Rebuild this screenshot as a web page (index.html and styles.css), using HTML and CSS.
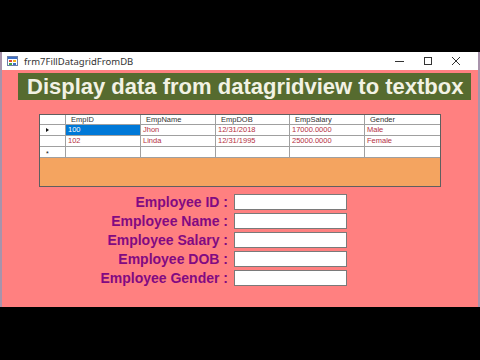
FILE: index.html
```html
<!DOCTYPE html>
<html>
<head>
<meta charset="utf-8">
<link rel="stylesheet" href="styles.css">
</head>
<body>
<div class="letterbox"></div>
<div class="window">
  <div class="titlebar">
    <svg class="app-icon" width="11" height="10" viewBox="0 0 11 10">
      <rect x="0.5" y="0.5" width="10" height="9" fill="#fff" stroke="#6b7fa8"/>
      <rect x="1" y="1" width="9" height="2" fill="#3d6fc4"/>
      <rect x="2" y="4" width="3" height="2" fill="#e0473a"/>
      <rect x="6" y="4" width="3" height="2" fill="#f2b31c"/>
      <rect x="2" y="7" width="3" height="2" fill="#45a845"/>
      <rect x="6" y="7" width="3" height="2" fill="#3d6fc4"/>
    </svg>
    <span class="title">frm7FillDatagridFromDB</span>
    <div class="controls">
      <span class="ctl"><svg width="10" height="10" viewBox="0 0 10 10"><line x1="0" y1="5.5" x2="9" y2="5.5" stroke="#333" stroke-width="1"/></svg></span>
      <span class="ctl"><svg width="10" height="10" viewBox="0 0 10 10"><rect x="1.5" y="1.5" width="7" height="7" fill="none" stroke="#333" stroke-width="1"/></svg></span>
      <span class="ctl"><svg width="10" height="10" viewBox="0 0 10 10"><path d="M1 1 L9 9 M9 1 L1 9" stroke="#333" stroke-width="1"/></svg></span>
    </div>
  </div>
  <div class="client">
    <div class="banner">Display data from datagridview to textbox</div>
    <div class="datagrid">
      <div class="cells">
        <div class="cell hdr rh"></div>
        <div class="cell hdr">EmpID</div>
        <div class="cell hdr">EmpName</div>
        <div class="cell hdr">EmpDOB</div>
        <div class="cell hdr">EmpSalary</div>
        <div class="cell hdr last">Gender</div>

        <div class="cell rh"><span class="arrow"></span></div>
        <div class="cell sel">100</div>
        <div class="cell">Jhon</div>
        <div class="cell">12/31/2018</div>
        <div class="cell">17000.0000</div>
        <div class="cell last">Male</div>

        <div class="cell rh"></div>
        <div class="cell">102</div>
        <div class="cell">Linda</div>
        <div class="cell">12/31/1995</div>
        <div class="cell">25000.0000</div>
        <div class="cell last">Female</div>

        <div class="cell rh"><span class="star">*</span></div>
        <div class="cell"></div>
        <div class="cell"></div>
        <div class="cell"></div>
        <div class="cell"></div>
        <div class="cell last"></div>
      </div>
    </div>
    <div class="form">
      <label class="lbl">Employee ID :</label><input class="tb" type="text">
      <label class="lbl">Employee Name :</label><input class="tb" type="text">
      <label class="lbl">Employee Salary :</label><input class="tb" type="text">
      <label class="lbl">Employee DOB :</label><input class="tb" type="text">
      <label class="lbl">Employee Gender :</label><input class="tb" type="text">
    </div>
  </div>
</div>
</body>
</html>
```

FILE: styles.css
```css
html, body {
  margin: 0;
  padding: 0;
}
body {
  width: 480px;
  height: 360px;
  overflow: hidden;
  background: #000;
  font-family: "Liberation Sans", Arial, sans-serif;
}
.letterbox {
  height: 52px;
}
.window {
  width: 480px;
  height: 255px;
  box-sizing: border-box;
  border-left: 2px solid #a893ab;
  border-right: 2px solid #a893ab;
  display: flex;
  flex-direction: column;
}
.titlebar {
  height: 18px;
  background: #fff;
  display: flex;
  align-items: center;
}
.app-icon {
  margin-left: 5px;
  display: block;
}
.title {
  margin-left: 6px;
  font-family: "Noto Sans", "Open Sans", sans-serif;
  font-size: 9.5px;
  color: #333;
}
.controls {
  margin-left: auto;
  display: flex;
  margin-right: 8px;
}
.ctl {
  width: 28px;
  height: 18px;
  display: flex;
  align-items: center;
  justify-content: center;
}
.ctl svg {
  display: block;
}
.client {
  flex: 1;
  background: #ff8080;
  padding-top: 3px;
}
.banner {
  margin-left: 16px;
  width: 453px;
  height: 27px;
  box-sizing: border-box;
  padding-left: 9px;
  background: #566b2f;
  color: #f2f2e4;
  font-weight: bold;
  font-size: 22px;
  line-height: 27px;
  white-space: nowrap;
}
.datagrid {
  margin: 14px 0 0 37px;
  width: 402px;
  height: 73px;
  box-sizing: border-box;
  border: 1px solid #5f5f5f;
  background: #f4a460;
}
.cells {
  display: grid;
  grid-template-columns: 26px 75px 75px 74px 75px 75px;
  grid-template-rows: 10px 11px 11px 11px;
}
.cell {
  box-sizing: border-box;
  background: #fff;
  border-right: 1px solid #a0a0a0;
  border-bottom: 1px solid #a0a0a0;
  font-size: 7.5px;
  line-height: 10px;
  padding-left: 2px;
  color: #b5303f;
  white-space: nowrap;
  overflow: hidden;
}
.cell.last {
  border-right: none;
}
.cell.hdr {
  color: #333;
  padding-left: 5px;
  line-height: 9px;
}
.cell.rh {
  position: relative;
  padding-left: 0;
}
.cell.sel {
  background: #0078d7;
  color: #fff;
}
.arrow {
  position: absolute;
  left: 6px;
  top: 3px;
  width: 0;
  height: 0;
  border-top: 2px solid transparent;
  border-bottom: 2px solid transparent;
  border-left: 3px solid #111;
}
.star {
  position: absolute;
  left: 6px;
  top: 2px;
  color: #111;
  font-size: 7px;
  line-height: 9px;
}
.form {
  margin-top: 7px;
  display: grid;
  grid-template-columns: 226px 113px;
  grid-auto-rows: 16px;
  column-gap: 6px;
  row-gap: 3px;
}
.lbl {
  text-align: right;
  color: #820a82;
  font-weight: bold;
  font-size: 14px;
  line-height: 16px;
  white-space: nowrap;
}
.tb {
  margin: 0;
  padding: 0;
  width: 113px;
  height: 16px;
  box-sizing: border-box;
  border: 1px solid #7a7a7a;
  background: #fff;
  outline: none;
}
```
